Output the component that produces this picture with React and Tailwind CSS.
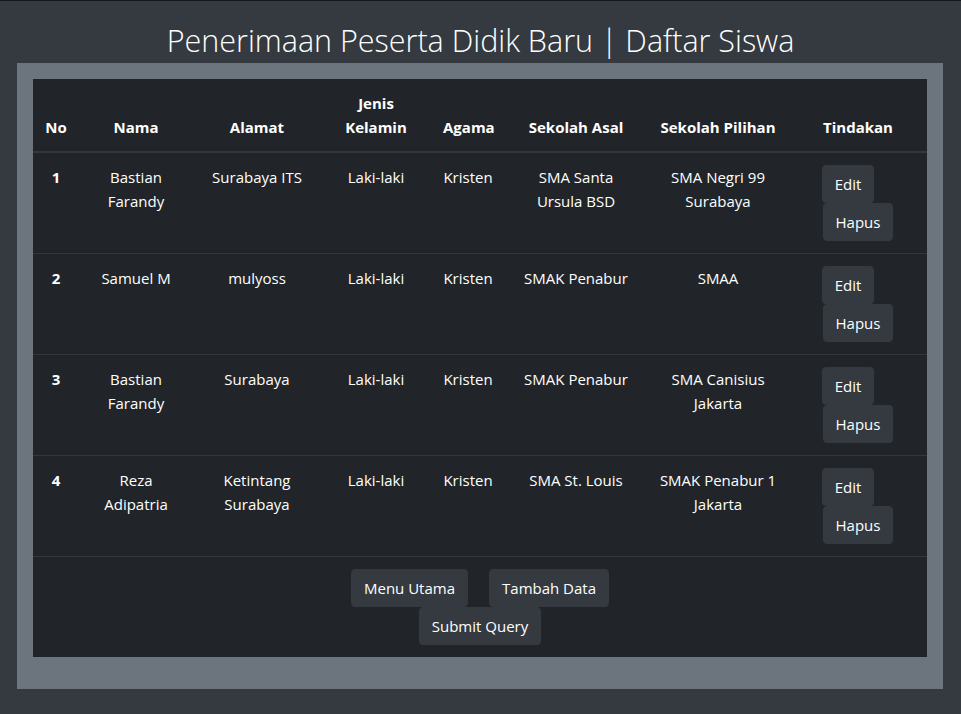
import React from 'react';

const students = [
  { no: 1, nama: 'Bastian Farandy', alamat: 'Surabaya ITS', jk: 'Laki-laki', agama: 'Kristen', asal: 'SMA Santa Ursula BSD', pilihan: 'SMA Negri 99 Surabaya' },
  { no: 2, nama: 'Samuel M', alamat: 'mulyoss', jk: 'Laki-laki', agama: 'Kristen', asal: 'SMAK Penabur', pilihan: 'SMAA' },
  { no: 3, nama: 'Bastian Farandy', alamat: 'Surabaya', jk: 'Laki-laki', agama: 'Kristen', asal: 'SMAK Penabur', pilihan: 'SMA Canisius Jakarta' },
  { no: 4, nama: 'Reza Adipatria', alamat: 'Ketintang Surabaya', jk: 'Laki-laki', agama: 'Kristen', asal: 'SMA St. Louis', pilihan: 'SMAK Penabur 1 Jakarta' },
];

// bootstrap-ish .btn-dark
const btn = 'bg-[#343a40] border border-[#343a40] text-white rounded px-3 py-1.5 leading-6';

const App = () => {
  return (
    <div className="min-h-[714px] bg-[#343a40] border-t border-[#16191c] text-white text-[15px]" style={{ fontFamily: '"Open Sans", "Noto Sans", sans-serif' }}>
      <h1 className="text-center text-[30.5px] font-light leading-[38px] pt-[20px] pb-[4px]">
        Penerimaan Peserta Didik Baru | Daftar Siswa
      </h1>

      <div className="ml-[17px] mr-[18px] bg-[#6c757d] p-4 pb-8">
        <table className="w-full table-fixed bg-[#212529] text-center border-collapse">
          <thead>
            <tr className="font-bold align-bottom">
              <th className="w-[46px] p-3 leading-6 border-b-2 border-[#32383e]">No</th>
              <th className="w-[114px] p-3 leading-6 border-b-2 border-[#32383e]">Nama</th>
              <th className="w-[128px] p-3 leading-6 border-b-2 border-[#32383e]">Alamat</th>
              <th className="w-[110px] p-3 leading-6 border-b-2 border-[#32383e]">Jenis Kelamin</th>
              <th className="w-[74px] p-3 leading-6 border-b-2 border-[#32383e]">Agama</th>
              <th className="w-[142px] p-3 leading-6 border-b-2 border-[#32383e]">Sekolah Asal</th>
              <th className="w-[142px] p-3 leading-6 border-b-2 border-[#32383e]">Sekolah Pilihan</th>
              <th className="p-3 leading-6 border-b-2 border-[#32383e]">Tindakan</th>
            </tr>
          </thead>
          <tbody>
            {students.map((s) => (
              <tr key={s.no} className="align-top border-t border-[#32383e]">
                <td className="p-3 leading-6 font-bold">{s.no}</td>
                <td className="p-3 leading-6">{s.nama}</td>
                <td className="p-3 leading-6">{s.alamat}</td>
                <td className="p-3 leading-6">{s.jk}</td>
                <td className="p-3 leading-6">{s.agama}</td>
                <td className="p-3 leading-6">{s.asal}</td>
                <td className="p-3 leading-6">{s.pilihan}</td>
                <td className="p-3 leading-6">
                  <div className="flex flex-col items-center">
                    <button className={`${btn} mr-[20px]`}>Edit</button>
                    <button className={btn}>Hapus</button>
                  </div>
                </td>
              </tr>
            ))}
            <tr className="border-t border-[#32383e]">
              <td colSpan={8} className="p-3 leading-6">
                <div className="flex flex-col items-center">
                  <div className="flex gap-[21px]">
                    <button className={btn}>Menu Utama</button>
                    <button className={btn}>Tambah Data</button>
                  </div>
                  <button className={btn}>Submit Query</button>
                </div>
              </td>
            </tr>
          </tbody>
        </table>
      </div>
    </div>
  );
};

export default App;
